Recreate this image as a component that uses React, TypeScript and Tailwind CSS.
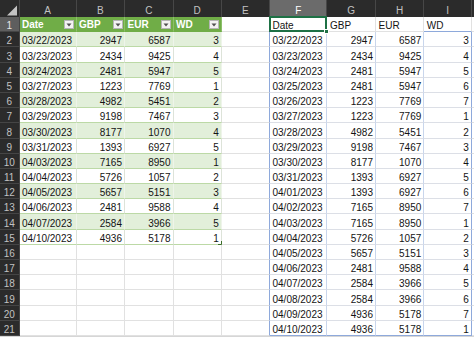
import React from 'react';

const left: string[][] = [
  ['03/22/2023', '2947', '6587', '3'],
  ['03/23/2023', '2434', '9425', '4'],
  ['03/24/2023', '2481', '5947', '5'],
  ['03/27/2023', '1223', '7769', '1'],
  ['03/28/2023', '4982', '5451', '2'],
  ['03/29/2023', '9198', '7467', '3'],
  ['03/30/2023', '8177', '1070', '4'],
  ['03/31/2023', '1393', '6927', '5'],
  ['04/03/2023', '7165', '8950', '1'],
  ['04/04/2023', '5726', '1057', '2'],
  ['04/05/2023', '5657', '5151', '3'],
  ['04/06/2023', '2481', '9588', '4'],
  ['04/07/2023', '2584', '3966', '5'],
  ['04/10/2023', '4936', '5178', '1'],
];

const right: string[][] = [
  ['03/22/2023', '2947', '6587', '3'],
  ['03/23/2023', '2434', '9425', '4'],
  ['03/24/2023', '2481', '5947', '5'],
  ['03/25/2023', '2481', '5947', '6'],
  ['03/26/2023', '1223', '7769', '7'],
  ['03/27/2023', '1223', '7769', '1'],
  ['03/28/2023', '4982', '5451', '2'],
  ['03/29/2023', '9198', '7467', '3'],
  ['03/30/2023', '8177', '1070', '4'],
  ['03/31/2023', '1393', '6927', '5'],
  ['04/01/2023', '1393', '6927', '6'],
  ['04/02/2023', '7165', '8950', '7'],
  ['04/03/2023', '7165', '8950', '1'],
  ['04/04/2023', '5726', '1057', '2'],
  ['04/05/2023', '5657', '5151', '3'],
  ['04/06/2023', '2481', '9588', '4'],
  ['04/07/2023', '2584', '3966', '5'],
  ['04/08/2023', '2584', '3966', '6'],
  ['04/09/2023', '4936', '5178', '7'],
  ['04/10/2023', '4936', '5178', '1'],
];

const colW = [
  'w-[57px]',
  'w-[48.5px]',
  'w-[48.5px]',
  'w-[48.2px]',
  'w-[48.3px]',
  'w-[57.5px]',
  'w-[48.5px]',
  'w-[48.3px]',
  'w-[47.5px]',
  'w-[20px]',
];
const letters = ['A', 'B', 'C', 'D', 'E', 'F', 'G', 'H', 'I', ''];

function FilterBtn() {
  return (
    <div className="absolute right-[1.5px] top-[3px] flex h-[9px] w-[10px] items-center justify-center border border-[#b5b5b5] bg-[#f3f3f3]">
      <svg width="6" height="4" viewBox="0 0 6 4">
        <polygon points="0.5,0.5 5.5,0.5 3,3.5" fill="#505050" />
      </svg>
    </div>
  );
}

function Cell({
  w,
  cls,
  align,
  children,
}: {
  w: string;
  cls: string;
  align: 'l' | 'r';
  children?: React.ReactNode;
}) {
  return (
    <div
      className={`${w} relative flex h-full shrink-0 items-end leading-[8px] pb-[1px] ${
        align === 'l' ? 'justify-start pl-[2.5px]' : 'justify-end pr-[2px]'
      } ${cls}`}
    >
      {children}
    </div>
  );
}

export default function App() {
  const rows = Array.from({ length: 21 }, (_, i) => i + 1);
  return (
    <div className="h-[337px] w-[474px] overflow-hidden bg-[#d6d6d6] font-['Liberation_Sans',Arial,sans-serif] text-[10px] text-[#141414]">
      {/* column header */}
      <div className="flex h-[17px] bg-[#2b2b2b]">
        <div className="relative h-full w-[19.5px] shrink-0 border-r border-[#474747]">
          <svg className="absolute left-0 top-0" width="19" height="17" viewBox="0 0 19 17">
            <polygon points="7,15.5 17,15.5 17,5.5" fill="#c4c4c4" />
          </svg>
        </div>
        {letters.map((l, i) => (
          <div
            key={i}
            className={`${colW[i]} flex h-full shrink-0 items-end justify-center border-r border-[#474747] pb-[2.5px] leading-[8px] ${
              l === 'F' ? 'bg-[#6b6b6b] text-white' : 'text-[#c2c2c2]'
            }`}
          >
            {l}
          </div>
        ))}
      </div>

      {rows.map((r) => {
        const isHead = r === 1;
        const inTable = r >= 2 && r <= 15;
        const band = inTable && r % 2 === 0;
        const ld = inTable ? left[r - 2] : null;
        const rd = r >= 2 ? right[r - 2] : null;
        const tableCell = band
          ? 'bg-[#e2efda] border-r border-b border-r-[#eef4ea] border-b-[#bcd9a6]'
          : 'bg-white border-r border-b border-r-[#dde3d9] border-b-[#bcd9a6]';
        const plain = 'bg-white border-r border-b border-[#e1e1e1]';
        const headCell =
          'bg-[#70ad47] text-white font-bold border-r border-b border-r-[#8cbf6a] border-b-[#70ad47] pb-[2.5px]';
        const blueInner =
          'bg-white border-r border-b border-r-[#c9d6ec] ' + (r === 21 ? 'border-b-[#8ea9db]' : 'border-b-[#dcdfe6]');
        const blueLast =
          'bg-white border-r border-b border-r-[#8ea9db] ' + (r === 21 ? 'border-b-[#8ea9db]' : 'border-b-[#dcdfe6]');
        return (
          <div key={r} className="flex h-[15.2px]">
            <div
              className={`flex h-full w-[19.5px] shrink-0 items-end justify-center border-r border-b border-[#454545] pb-[1px] leading-[8px] ${
                isHead ? 'bg-[#5e5e5e] text-[#e6e6e6]' : 'bg-[#2b2b2b] text-[#c2c2c2]'
              }`}
            >
              {r}
            </div>
            {/* A-D */}
            {isHead ? (
              <>
                <Cell w={colW[0]} cls={headCell} align="l">
                  Date
                  <FilterBtn />
                </Cell>
                <Cell w={colW[1]} cls={headCell} align="l">
                  GBP
                  <FilterBtn />
                </Cell>
                <Cell w={colW[2]} cls={headCell} align="l">
                  EUR
                  <FilterBtn />
                </Cell>
                <Cell w={colW[3]} cls={headCell} align="l">
                  WD
                  <FilterBtn />
                </Cell>
              </>
            ) : ld ? (
              <>
                <Cell w={colW[0]} cls={tableCell} align="l">
                  {ld[0]}
                </Cell>
                <Cell w={colW[1]} cls={tableCell} align="r">
                  {ld[1]}
                </Cell>
                <Cell w={colW[2]} cls={tableCell} align="r">
                  {ld[2]}
                </Cell>
                <Cell w={colW[3]} cls={tableCell} align="r">
                  {ld[3]}
                  {r === 15 && (
                    <svg className="absolute bottom-[-1px] right-[-1px]" width="4" height="4" viewBox="0 0 4 4">
                      <polyline points="3.5,0 3.5,3.5 0,3.5" fill="none" stroke="#3c6e2a" strokeWidth="1" />
                    </svg>
                  )}
                </Cell>
              </>
            ) : (
              <>
                <Cell w={colW[0]} cls={plain} align="l" />
                <Cell w={colW[1]} cls={plain} align="r" />
                <Cell w={colW[2]} cls={plain} align="r" />
                <Cell w={colW[3]} cls={plain} align="r" />
              </>
            )}
            {/* E */}
            <Cell
              w={colW[4]}
              cls={r >= 2 ? 'bg-white border-r border-b border-r-[#8ea9db] border-b-[#e1e1e1]' : plain}
              align="l"
            />
            {/* F-I */}
            {isHead ? (
              <>
                <Cell w={colW[5]} cls={plain} align="l">
                  Date
                  <div className="pointer-events-none absolute bottom-[-1px] left-[-1px] right-[-1px] top-[-1px] border-2 border-[#1e7145]" />
                  <div className="absolute bottom-[-3px] right-[-3px] z-10 h-[5px] w-[5px] border border-white bg-[#1e7145]" />
                </Cell>
                <Cell w={colW[6]} cls={plain} align="l">
                  GBP
                </Cell>
                <Cell w={colW[7]} cls={plain} align="l">
                  EUR
                </Cell>
                <Cell w={colW[8]} cls="bg-white border-r border-b border-r-[#e1e1e1] border-b-[#8ea9db]" align="l">
                  WD
                </Cell>
              </>
            ) : (
              rd && (
                <>
                  <Cell w={colW[5]} cls={blueInner} align="l">
                    {rd[0]}
                  </Cell>
                  <Cell w={colW[6]} cls={blueInner} align="r">
                    {rd[1]}
                  </Cell>
                  <Cell w={colW[7]} cls={blueInner} align="r">
                    {rd[2]}
                  </Cell>
                  <Cell w={colW[8]} cls={blueLast} align="r">
                    {rd[3]}
                  </Cell>
                </>
              )
            )}
            {/* J */}
            <Cell w={colW[9]} cls={plain} align="l" />
          </div>
        );
      })}
    </div>
  );
}
